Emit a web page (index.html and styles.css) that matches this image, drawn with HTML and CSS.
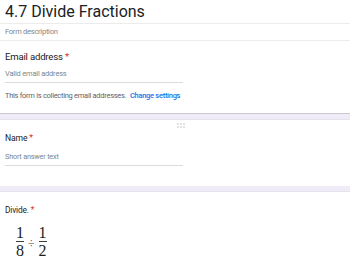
FILE: index.html
```html
<!DOCTYPE html>
<html lang="en">
<head>
    <meta charset="UTF-8">
    <meta name="viewport" content="width=device-width, initial-scale=1.0">
    <title>4.7 Divide Fractions</title>
    <link rel="stylesheet" href="styles.css">
</head>
<body>
    <div class="card">
        <h1 class="form-title">4.7 Divide Fractions</h1>
        <div class="form-desc">Form description</div>

        <div class="question-title">Email address <span class="req">*</span></div>
        <div class="answer-line">Valid email address</div>
        <div class="notice">
            This form is collecting email addresses.
            <a class="link" href="#">Change settings</a>
        </div>
    </div>

    <div class="gap"></div>

    <div class="card card-name">
        <div class="drag-handle">
            <svg width="8" height="5" viewBox="0 0 8 5">
                <circle cx="1" cy="1" r="0.7" fill="#b0b0b0"/>
                <circle cx="4" cy="1" r="0.7" fill="#b0b0b0"/>
                <circle cx="7" cy="1" r="0.7" fill="#b0b0b0"/>
                <circle cx="1" cy="4" r="0.7" fill="#b0b0b0"/>
                <circle cx="4" cy="4" r="0.7" fill="#b0b0b0"/>
                <circle cx="7" cy="4" r="0.7" fill="#b0b0b0"/>
            </svg>
        </div>
        <div class="question-title small">Name <span class="req">*</span></div>
        <div class="answer-line short">Short answer text</div>
    </div>

    <div class="gap"></div>

    <div class="card">
        <div class="question-title tiny">Divide. <span class="req">*</span></div>
        <div class="math">
            <span class="frac">
                <span class="num">1</span>
                <span class="den">8</span>
            </span>
            <span class="op">÷</span>
            <span class="frac">
                <span class="num">1</span>
                <span class="den">2</span>
            </span>
        </div>
    </div>
</body>
</html>
```

FILE: styles.css
```css
* {
    margin: 0;
    padding: 0;
    box-sizing: border-box;
}

body {
    font-family: Roboto, "Noto Sans", Arial, sans-serif;
    background: #fff;
    color: #202124;
    width: 350px;
    overflow: hidden;
}

.card {
    background: #fff;
    padding: 0 5px;
}

.card-name {
    padding-bottom: 20px;
}

.form-title {
    font-weight: 400;
    font-size: 16px;
    line-height: 23px;
    color: #202124;
    margin: 0 -5px;
    padding: 0 5px;
    border-bottom: 1px solid #ececec;
}

.form-desc {
    font-size: 7.5px;
    letter-spacing: -0.25px;
    line-height: 16px;
    color: #80868b;
    margin: 0 -5px;
    padding: 0 5px;
    border-bottom: 1px solid #ececec;
}

.question-title {
    font-size: 9.6px;
    letter-spacing: -0.2px;
    line-height: 14px;
    padding-top: 9px;
    color: #202124;
}

.question-title.small {
    font-size: 8.6px;
    letter-spacing: -0.15px;
    padding-top: 3px;
}

.question-title.tiny {
    font-size: 8.3px;
    letter-spacing: -0.15px;
    padding-top: 11px;
}

.req {
    color: #d93025;
}

.answer-line {
    width: 178px;
    font-size: 7.5px;
    letter-spacing: -0.2px;
    line-height: 17px;
    color: #80868b;
    border-bottom: 1px solid #dadce0;
    margin-top: 1px;
}

.answer-line.short {
    font-size: 7.3px;
    letter-spacing: -0.2px;
    line-height: 16px;
    margin-top: 4px;
}

.notice {
    font-size: 7.5px;
    letter-spacing: -0.28px;
    line-height: 14px;
    color: #5f6368;
    margin: 6px -5px 0;
    padding: 0 0 10px 5px;
    border-bottom: 1px solid #c9c9cf;
}

.link {
    color: #1a73e8;
    font-weight: 500;
    text-decoration: none;
    margin-left: 2px;
}

.gap {
    height: 6px;
    background: #efebf7;
    border-bottom: 1px solid #e6e2ee;
}

.drag-handle {
    height: 8px;
    display: flex;
    justify-content: center;
    align-items: center;
    padding-left: 12px;
    padding-top: 2px;
}

.math {
    display: flex;
    align-items: center;
    gap: 4px;
    margin-top: 9px;
    margin-left: 11px;
    font-family: "Liberation Serif", "Times New Roman", serif;
    font-size: 16px;
    color: #202124;
}

.frac {
    display: inline-flex;
    flex-direction: column;
    align-items: center;
    width: 8px;
}

.num {
    line-height: 14px;
    width: 8px;
    text-align: center;
    border-bottom: 1px solid #3c3c3c;
    padding-bottom: 1px;
}

.den {
    line-height: 14px;
    padding-top: 2px;
}

.op {
    font-size: 12px;
    color: #404040;
    margin-top: 2px;
}
```
